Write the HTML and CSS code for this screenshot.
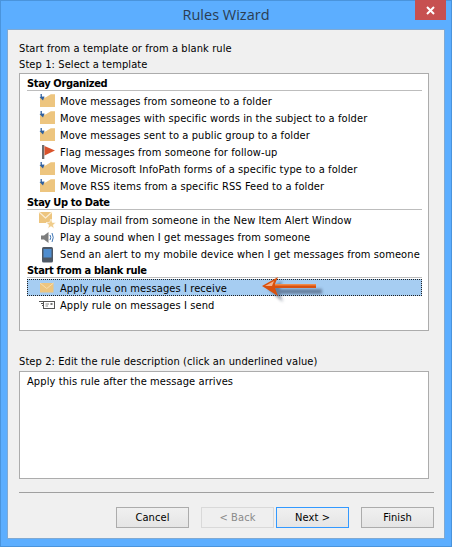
FILE: index.html
```html
<!DOCTYPE html>
<html lang="en">
<head>
<meta charset="utf-8">
<title>Rules Wizard</title>
<link rel="stylesheet" href="styles.css">
</head>
<body>
<svg class="defs" width="0" height="0" aria-hidden="true">
  <defs>
    <symbol id="folder" viewBox="0 0 18 16">
      <path d="M2 3.500H7.500L12.800 0.300H17V13H2Z" fill="#edc57f"/>
      <path d="M3.500 -1V1.500Q3.500 3 5.500 3.500" fill="none" stroke="#fff" stroke-width="2.500"/>
      <path d="M3.200 0V2.500Q3.500 3.800 5.500 3.500" fill="none" stroke="#2f5f9e" stroke-width="1.300"/>
      <path d="M1.500 3L6.500 2.500L5 6.500Z" fill="#2f5f9e"/>
    </symbol>
  </defs>
</svg>
<div class="window">
  <header class="titlebar">
    <h1 class="title">Rules Wizard</h1>
    <button class="close" type="button" aria-label="Close">
      <svg width="9" height="9" viewBox="0 0 9 9"><path d="M1 1L8 8M8 1L1 8" stroke="#fff" stroke-width="2"/></svg>
    </button>
  </header>
  <main class="client">
    <p class="label">Start from a template or from a blank rule</p>
    <p class="label">Step 1: Select a template</p>
    <div class="listbox">
      <h2 class="group group-first">Stay Organized</h2>
      <div class="row"><svg class="icon"><use href="#folder"/></svg>Move messages from someone to a folder</div>
      <div class="row"><svg class="icon"><use href="#folder"/></svg>Move messages with specific words in the subject to a folder</div>
      <div class="row"><svg class="icon"><use href="#folder"/></svg>Move messages sent to a public group to a folder</div>
      <div class="row">
        <svg class="icon" viewBox="0 0 18 16"><rect x="4" y="0" width="2.300" height="14" fill="#6d6d6d"/><path d="M6.500 1L17 5.500L6.500 10.500Z" fill="#d9532c"/></svg>Flag messages from someone for follow-up</div>
      <div class="row"><svg class="icon"><use href="#folder"/></svg>Move Microsoft InfoPath forms of a specific type to a folder</div>
      <div class="row"><svg class="icon"><use href="#folder"/></svg>Move RSS items from a specific RSS Feed to a folder</div>
      <h2 class="group">Stay Up to Date</h2>
      <div class="row">
        <svg class="icon" viewBox="0 0 18 16"><path d="M1 -1H14V10H1Z" fill="#edc57f"/><path d="M1 -1L7.500 5L14 -1" fill="none" stroke="#fbeed5" stroke-width="1.200"/><path d="M13 6L14.400 9.400L18 9.600L15.200 12L16.200 15.500L13 13.600L9.800 15.500L10.800 12L8 9.600L11.600 9.400Z" fill="#f0cd8c" stroke="#fff" stroke-width=".6"/></svg>Display mail from someone in the New Item Alert Window</div>
      <div class="row">
        <svg class="icon" viewBox="0 0 18 16"><path d="M3 5.500H6L10.500 2V13L6 9.500H3Z" fill="#7d7d7d"/><path d="M12 5Q13.500 7.500 12 10M14 3Q16.500 7.500 14 12" fill="none" stroke="#3f76b5" stroke-width="1"/></svg>Play a sound when I get messages from someone</div>
      <div class="row">
        <svg class="icon" viewBox="0 0 18 16"><rect x="4" y="0" width="11" height="15.500" rx="1.500" fill="#4e5865"/><rect x="5.500" y="2" width="8" height="8.500" fill="#4f8dcf"/></svg>Send an alert to my mobile device when I get messages from someone</div>
      <h2 class="group group-last">Start from a blank rule</h2>
      <div class="row row-low row-selected">
        <svg class="icon" viewBox="0 0 18 16"><path d="M2 3H15.500V12.500H2Z" fill="#edc57f"/><path d="M2 3L8.750 8.500L15.500 3" fill="none" stroke="#f7dfb0" stroke-width="1"/></svg>Apply rule on messages I receive</div>
      <div class="row row-low">
        <svg class="icon" viewBox="0 0 18 16"><path d="M1 4.500H5M3 6.500H5M4 8.500H5" stroke="#555" stroke-width="1"/><rect x="5.500" y="4.500" width="11" height="7" fill="#fff" stroke="#555"/><path d="M7.500 7H11M7.500 9H10" stroke="#888"/><rect x="12.500" y="6" width="2" height="2" fill="#777"/></svg>Apply rule on messages I send</div>
      <svg class="pointer" width="66" height="30" viewBox="0 0 66 30" aria-hidden="true">
        <defs>
          <filter id="shadow" x="-20%" y="-30%" width="140%" height="170%"><feGaussianBlur stdDeviation="1.800"/></filter>
        </defs>
        <path d="M5 11L19 3L17 11H59V16H17L20 24Z" fill="#33405a" opacity=".55" transform="translate(3 3)" filter="url(#shadow)"/>
        <path d="M2 11L18 2L15 9H56V13H15L18 21Z" fill="#d9510f"/>
        <path d="M15 9H56V10.500H15Z" fill="#f08a4a"/>
        <path d="M5 11L14 6L12 11Z" fill="#f6b08a"/>
      </svg>
    </div>
    <p class="label label-step2">Step 2: Edit the rule description (click an underlined value)</p>
    <div class="description">Apply this rule after the message arrives</div>
    <hr class="divider">
    <footer class="actions">
      <button class="btn" type="button">Cancel</button>
      <button class="btn btn-disabled" type="button" disabled>&lt; Back</button>
      <button class="btn btn-default" type="button">Next &gt;</button>
      <button class="btn btn-finish" type="button">Finish</button>
    </footer>
  </main>
</div>
</body>
</html>
```
FILE: styles.css
```css
* { box-sizing: border-box; }
html, body { margin: 0; padding: 0; }
body { width: 452px; height: 547px; overflow: hidden; font-family: "DejaVu Sans Condensed", "DejaVu Sans", sans-serif; font-stretch: condensed; font-size: 11px; letter-spacing: .1px; color: #000; }
.defs { display: block; height: 0; }
.window { width: 452px; height: 547px; background: #5caeff; border: 1px solid #4a94dc; padding: 0 6px 7px; display: flex; flex-direction: column; }
.titlebar { height: 28px; flex: none; display: flex; justify-content: center; align-items: center; position: relative; }
.title { margin: 0 0 1px; font: 400 14.5px/20px "Open Sans", sans-serif; letter-spacing: 0; color: #2b3d52; }
.close { position: absolute; top: -1px; right: -1px; width: 31px; height: 20px; border: 0; padding: 0; background: #c75050; display: flex; align-items: center; justify-content: center; }
.client { flex: 1; background: #f0f0f0; border: 1px solid #7fa9d3; padding: 11px 10px 0 11px; display: flex; flex-direction: column; }
.label { margin: 0; height: 16px; line-height: 16px; white-space: nowrap; }
.listbox { position: relative; width: 410px; height: 258px; background: #fff; border: 1px solid #acacac; padding: 0 6px 0 7px; }
.group { margin: 0 0 2px; height: 15px; line-height: 16px; font-size: 11px; font-weight: 700; letter-spacing: -.35px; border-bottom: 1px solid #bdbdbd; }
.group-first { margin-top: 2px; }
.group-last { margin-bottom: 1px; }
.row { height: 17px; line-height: 17px; padding-left: 11px; display: flex; align-items: center; gap: 4px; white-space: nowrap; }
.row-low { padding-top: 1px; }
.row-selected { background: #a6cdf2; outline: 1px dotted #222; outline-offset: -1px; }
.icon { width: 18px; height: 16px; flex: none; overflow: visible; }
.pointer { position: absolute; top: 201px; left: 240px; }
.label-step2 { margin-top: 23px; }
.description { width: 410px; height: 108px; margin-top: 1px; background: #fff; border: 1px solid #acacac; padding: 2px 7px; line-height: 15px; }
.divider { width: 415px; margin: 13px 0 0; border: 0; border-top: 1px solid #a0a0a0; height: 1px; }
.actions { display: flex; margin-top: 14px; padding-left: 97px; }
.btn { flex: none; width: 73px; height: 21px; padding: 0; font: inherit; letter-spacing: inherit; color: #000; border: 1px solid #acacac; background: linear-gradient(#f0f0f0, #e5e5e5); }
.btn-disabled { margin-left: 12px; color: #8a8a8a; border-color: #d9d9d9; background: #efefef; }
.btn-default { margin-left: 2px; border-color: #3399ff; }
.btn-finish { margin-left: 12px; }
```
